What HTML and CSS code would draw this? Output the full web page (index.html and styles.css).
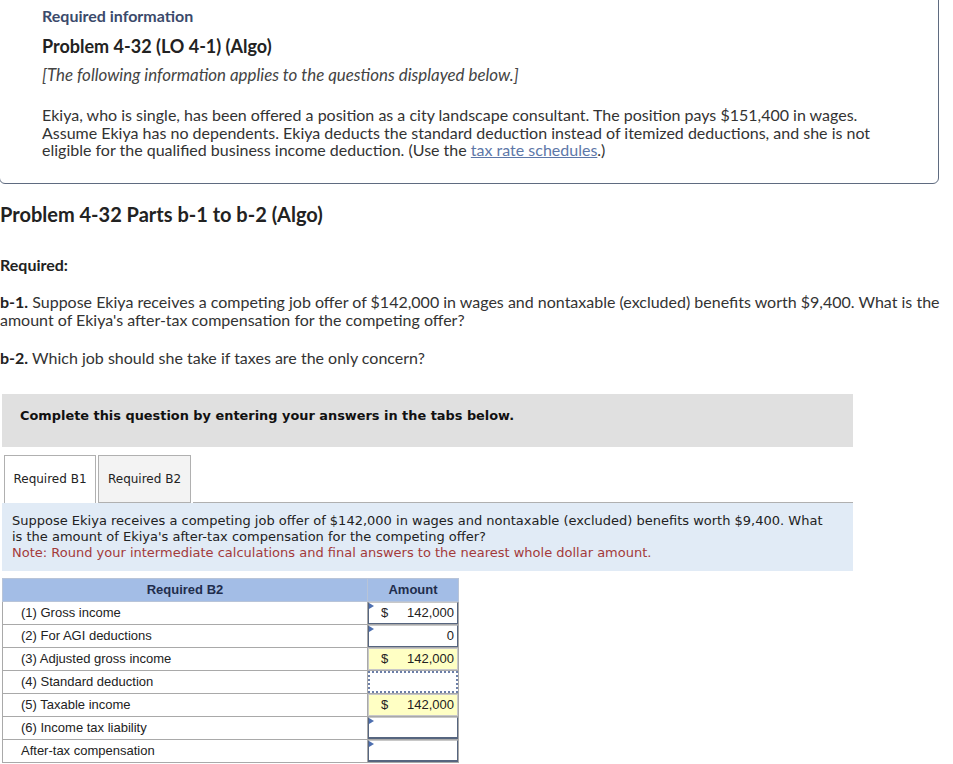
FILE: index.html
```html
<!DOCTYPE html>
<html>
<head>
<meta charset="utf-8">
<link rel="stylesheet" href="styles.css">
</head>
<body>
<div class="info-box">
  <div class="req-info">Required information</div>
  <div class="prob-title">Problem 4-32 (LO 4-1) (Algo)</div>
  <div class="italic-note">[The following information applies to the questions displayed below.]</div>
  <p class="info-text">Ekiya, who is single, has been offered a position as a city landscape consultant. The position pays $151,400 in wages. Assume Ekiya has no dependents. Ekiya deducts the standard deduction instead of itemized deductions, and she is not eligible for the qualified business income deduction. (Use the <a class="link" href="#">tax rate schedules</a>.)</p>
</div>

<h2 class="parts-title">Problem 4-32 Parts b-1 to b-2 (Algo)</h2>
<div class="required">Required:</div>
<p class="q q1"><b>b-1.</b> Suppose Ekiya receives a competing job offer of $142,000 in wages and nontaxable (excluded) benefits worth $9,400. What is the amount of Ekiya's after-tax compensation for the competing offer?</p>
<p class="q q2"><b>b-2.</b> Which job should she take if taxes are the only concern?</p>

<div class="complete-box">Complete this question by entering your answers in the tabs below.</div>

<div class="tabs">
  <div class="tab active">Required B1</div>
  <div class="tab">Required B2</div>
  <div class="tab-line"></div>
</div>

<div class="prompt-box">
  <div>Suppose Ekiya receives a competing job offer of $142,000 in wages and nontaxable (excluded) benefits worth $9,400. What is the amount of Ekiya's after-tax compensation for the competing offer?</div>
  <div class="note">Note: Round your intermediate calculations and final answers to the nearest whole dollar amount.</div>
</div>

<table class="grid">
  <thead>
    <tr><th class="c1">Required B2</th><th class="c2">Amount</th></tr>
  </thead>
  <tbody>
    <tr><td class="c1">(1) Gross income</td><td class="c2"><div class="inp edit"><span class="cur">$</span><span class="val">142,000</span></div></td></tr>
    <tr><td class="c1">(2) For AGI deductions</td><td class="c2"><div class="inp edit"><span class="cur"></span><span class="val">0</span></div></td></tr>
    <tr><td class="c1">(3) Adjusted gross income</td><td class="c2"><div class="inp calc"><span class="cur">$</span><span class="val">142,000</span></div></td></tr>
    <tr><td class="c1">(4) Standard deduction</td><td class="c2"><div class="inp dotted"></div></td></tr>
    <tr><td class="c1">(5) Taxable income</td><td class="c2"><div class="inp calc"><span class="cur">$</span><span class="val">142,000</span></div></td></tr>
    <tr><td class="c1">(6) Income tax liability</td><td class="c2"><div class="inp edit thick"></div></td></tr>
    <tr><td class="c1 last">After-tax compensation</td><td class="c2"><div class="inp edit thick"></div></td></tr>
  </tbody>
</table>
</body>
</html>
```

FILE: styles.css
```css
html, body {
  margin: 0;
  padding: 0;
  background: #ffffff;
}
body {
  font-family: Lato, "Open Sans", Arial, sans-serif;
  color: #333333;
  width: 953px;
  overflow: hidden;
}
.info-box {
  margin: -12px 14px 0 -1px;
  border: 1px solid #5f6b80;
  border-radius: 6px;
  padding: 17px 56px 24px 42px;
}
.req-info {
  font-size: 16px;
  font-weight: 700;
  line-height: 20px;
  color: #3b4a6b;
}
.prob-title {
  margin-top: 9px;
  font-size: 18px;
  font-weight: 700;
  line-height: 22px;
  color: #222;
}
.italic-note {
  margin-top: 8px;
  font-size: 16.9px;
  font-style: italic;
  line-height: 20px;
  color: #444;
}
.info-text {
  margin: 21px 0 0 0;
  font-size: 16px;
  line-height: 17.5px;
  color: #333;
}
.link {
  color: #5d77a8;
  text-decoration: underline;
}
.parts-title {
  margin: 18px 0 0 0;
  font-size: 20px;
  font-weight: 700;
  line-height: 24px;
  color: #222;
}
.required {
  margin-top: 29px;
  font-size: 16px;
  font-weight: 700;
  line-height: 20px;
  color: #222;
}
.q {
  margin: 0;
  font-size: 16px;
  line-height: 18px;
  color: #333;
}
.q b {
  color: #222;
}
.q1 {
  margin-top: 18px;
  padding-right: 0;
}
.q2 {
  margin-top: 20px;
}
.complete-box {
  margin: 27px 100px 0 2px;
  height: 53px;
  box-sizing: border-box;
  padding: 13px 0 0 18px;
  background: #e0e0e0;
  font-family: "DejaVu Sans", Verdana, sans-serif;
  font-size: 12.9px;
  font-weight: 700;
  line-height: 18px;
  color: #111;
}
.tabs {
  margin: 8px 100px 0 4px;
  display: flex;
  align-items: flex-end;
  height: 48px;
}
.tab {
  box-sizing: border-box;
  width: 93px;
  height: 48px;
  border: 1px solid #b0b0b0;
  border-bottom: none;
  background: #f3f3f3;
  font-family: "DejaVu Sans", Verdana, sans-serif;
  font-size: 12px;
  color: #222;
  display: flex;
  align-items: center;
  justify-content: center;
  margin-right: 2px;
  box-shadow: inset 0 -1px 0 #b0b0b0;
}
.tab.active {
  background: #ffffff;
  box-shadow: none;
  width: 92px;
  margin-right: 2px;
}
.tab-line {
  flex: 1;
  height: 1px;
  background: #b0b0b0;
}
.prompt-box {
  margin: 0 100px 0 2px;
  padding: 10px 20px 10px 10px;
  background: #e1ebf6;
  font-family: "DejaVu Sans", Verdana, sans-serif;
  font-size: 13px;
  line-height: 16px;
  color: #222;
}
.note {
  color: #a33a3a;
}
.grid {
  margin: 7px 0 0 2px;
  border-collapse: collapse;
  font-family: "Liberation Sans", Arial, sans-serif;
  font-size: 13px;
  color: #222;
}
.grid th {
  height: 22px;
  background: #a3bde6;
  border: 1px solid #b8c4d8;
  font-weight: 700;
  font-size: 13px;
  color: #1f2d4d;
  padding: 0;
}
.grid td {
  height: 22px;
  padding: 0;
  border: 1px solid #a9a9a9;
}
.grid .c1 {
  width: 346px;
  padding-left: 18px;
}
.grid th.c1 {
  padding-left: 0;
  text-align: center;
}
.grid .c2 {
  width: 90px;
}
.grid td.c2 {
  border-left: 1px solid #a9a9a9;
  padding: 0;
  position: relative;
}
.inp {
  box-sizing: border-box;
  height: 22px;
  display: flex;
  align-items: center;
  justify-content: space-between;
  padding: 0 3px 0 12px;
  border-left: 1px solid #56657f;
  border-right: 1px solid #56657f;
  border-top: 1px solid #c8c8c8;
  border-bottom: 1px solid #56657f;
  background: #ffffff;
  position: relative;
  font-size: 13px;
}
.inp.calc {
  background: #ffffc4;
  border-color: #c8c8c8;
}
.inp.dotted {
  border: 2px dotted #6c7fa8;
  background: #ffffff;
}
.inp.thick {
  border-bottom: 2px solid #56657f;
}
.inp.edit::before {
  content: "";
  position: absolute;
  left: 0;
  top: 0;
  width: 0;
  height: 0;
  border-top: 3px solid transparent;
  border-bottom: 3px solid transparent;
  border-left: 5px solid #4d6fb0;
}
.val {
  text-align: right;
}
```
